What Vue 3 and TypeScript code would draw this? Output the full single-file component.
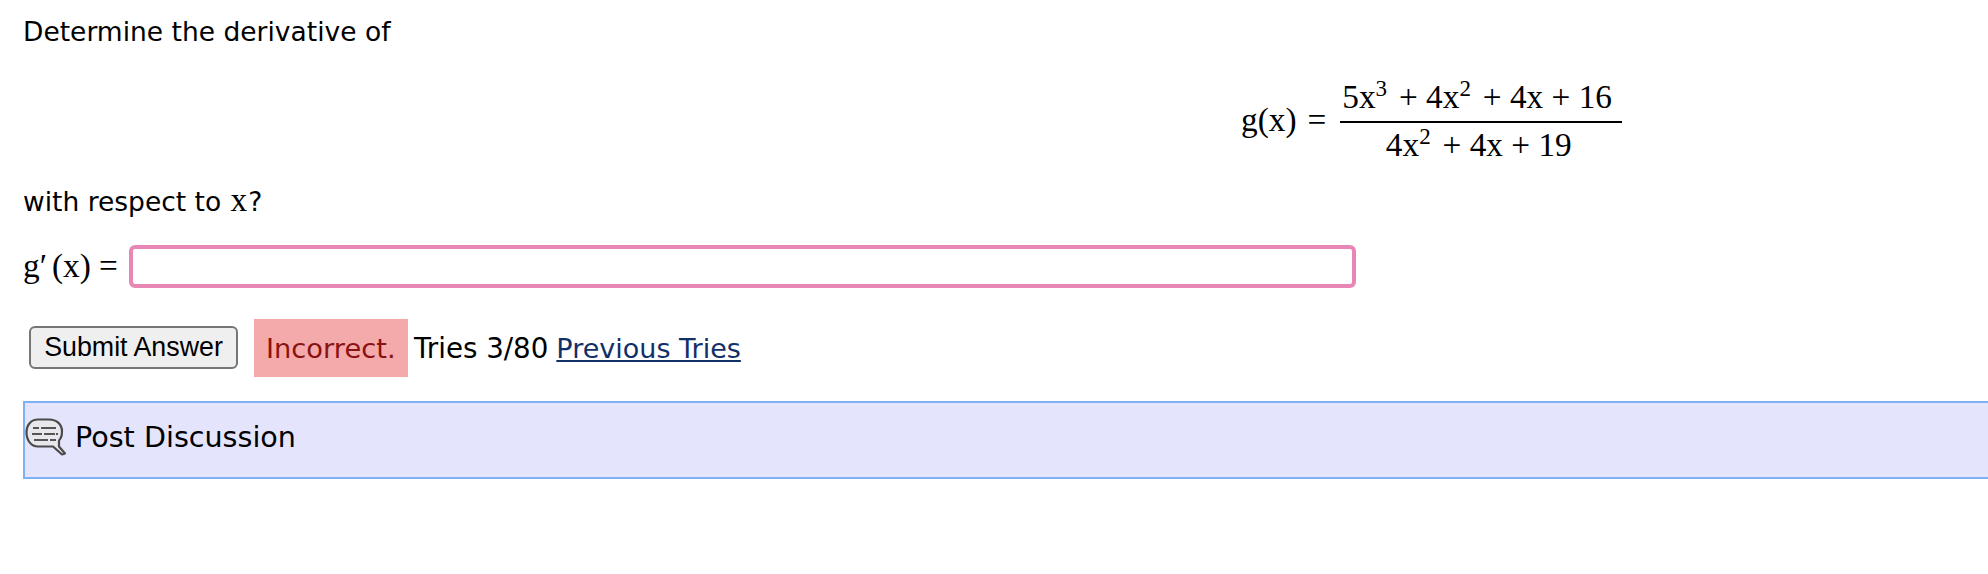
<script setup lang="ts">
const title = 'Post Discussion'
</script>

<template>
  <main class="page">
    <p class="line first">Determine the derivative of</p>
    <div class="display">
      <span class="math lhs">g(x)<span class="eq">=</span></span>
      <span class="frac math">
        <span class="num">5x<sup>3</sup> + 4x<sup>2</sup> + 4x + 16</span>
        <span class="den">4x<sup>2</sup> + 4x + 19</span>
      </span>
    </div>
    <p class="line second">with respect to <span class="math">x</span>?</p>
    <div class="answer">
      <span class="math label">g<span class="prime">&#8242;</span>(x) =</span>
      <input class="input" type="text" />
    </div>
    <div class="status">
      <button class="submit" type="button">Submit Answer</button>
      <span class="incorrect">Incorrect.</span>
      <span class="tries">Tries 3/80</span>
      <a class="prev" href="#">Previous Tries</a>
    </div>
    <div class="post">
      <svg class="icon" viewBox="0 0 42 40" width="42" height="40" aria-hidden="true">
        <path d="M13 2.500h11c8 0 13 5 13 12 0 4-1 7-3 9v6l6 7-3 1-9-8H13C6 29.500 1.500 23 1.500 15.500 1.500 8 6 2.500 13 2.500z" fill="#e8e8ec" stroke="#4a4a4a" stroke-width="2.200" stroke-linejoin="round"/>
        <path d="M8 11h6M16 11h15M7 17h10M19 17h11M31 17h2M9 23h14M25 23h6" stroke="#555" stroke-width="2" fill="none"/>
      </svg>
      <span class="post-text">{{ title }}</span>
    </div>
  </main>
</template>

<style>
html, body { margin: 0; background: #fff; overflow: hidden; }
</style>

<style scoped>
.page {
  width: 1988px;
  height: 574px;
  padding-left: 23px;
  box-sizing: border-box;
  font-family: "DejaVu Sans", Verdana, sans-serif;
  font-size: 26.5px;
  color: #000;
  overflow: hidden;
}
.math { font-family: "Liberation Serif", "Times New Roman", serif; }
.line { margin: 0; line-height: 32px; }
.first { padding-top: 16px; }
.display {
  display: flex;
  align-items: center;
  padding-left: 1218px;
  margin-top: 16px;
  height: 114px;
  font-size: 33.300px;
}
.lhs { margin-right: 14px; margin-bottom: 2px; }
.eq { margin-left: 11px; }
.frac { display: inline-flex; flex-direction: column; align-items: center; width: 282px; }
.num { align-self: flex-start; padding: 0 0 3px 2px; line-height: 42px; white-space: pre; }
.den { border-top: 2px solid #000; align-self: stretch; box-sizing: border-box; padding-right: 5px; text-align: center; line-height: 43px; white-space: pre; }
sup { font-size: 23px; line-height: 0; vertical-align: 12px; margin-right: 3.600px; }
.second { margin-top: 6px; }
.second .math { font-size: 33.300px; margin: 0 1px; }
.answer { display: flex; align-items: center; margin-top: 27px; height: 43px; }
.label { font-size: 33.300px; width: 106px; position: relative; top: -1px; }
.prime { margin-right: 5px; }
.input {
  width: 1227px;
  height: 43px;
  box-sizing: border-box;
  border: 4px solid #e887b5;
  border-radius: 6px;
  background: #fff;
  padding: 0;
  outline: none;
}
.status { display: flex; align-items: center; margin-top: 31px; height: 58px; padding-left: 6px; font-size: 27.300px; }
.submit {
  width: 209px;
  height: 43px;
  margin-bottom: 2px;
  box-sizing: border-box;
  font-family: "Liberation Sans", Arial, sans-serif;
  font-size: 26.800px;
  color: #000;
  background: #efefef;
  border: 2px solid #767676;
  border-radius: 6px;
  padding: 0;
}
.incorrect {
  margin-left: 16px;
  height: 58px;
  width: 154px;
  box-sizing: border-box;
  padding-left: 12px;
  line-height: 60px;
  background: #f4aaaa;
  color: #8a1212;
}
.tries { margin-left: 6px; font-size: 27.700px; }
.prev { margin-left: 8px; font-size: 27px; color: #123068; text-decoration: underline; }
.post {
  margin-top: 24px;
  height: 78px;
  width: 2200px;
  box-sizing: border-box;
  border: 2px solid #7fb0f4;
  background: #e4e4fd;
  display: flex;
  align-items: flex-start;
  padding-top: 14px;
}
.icon { display: block; margin-left: 0; margin-top: 0; flex: none; }
.post-text { margin-left: 8px; margin-top: 2px; font-size: 28.600px; line-height: 36px; }
</style>
